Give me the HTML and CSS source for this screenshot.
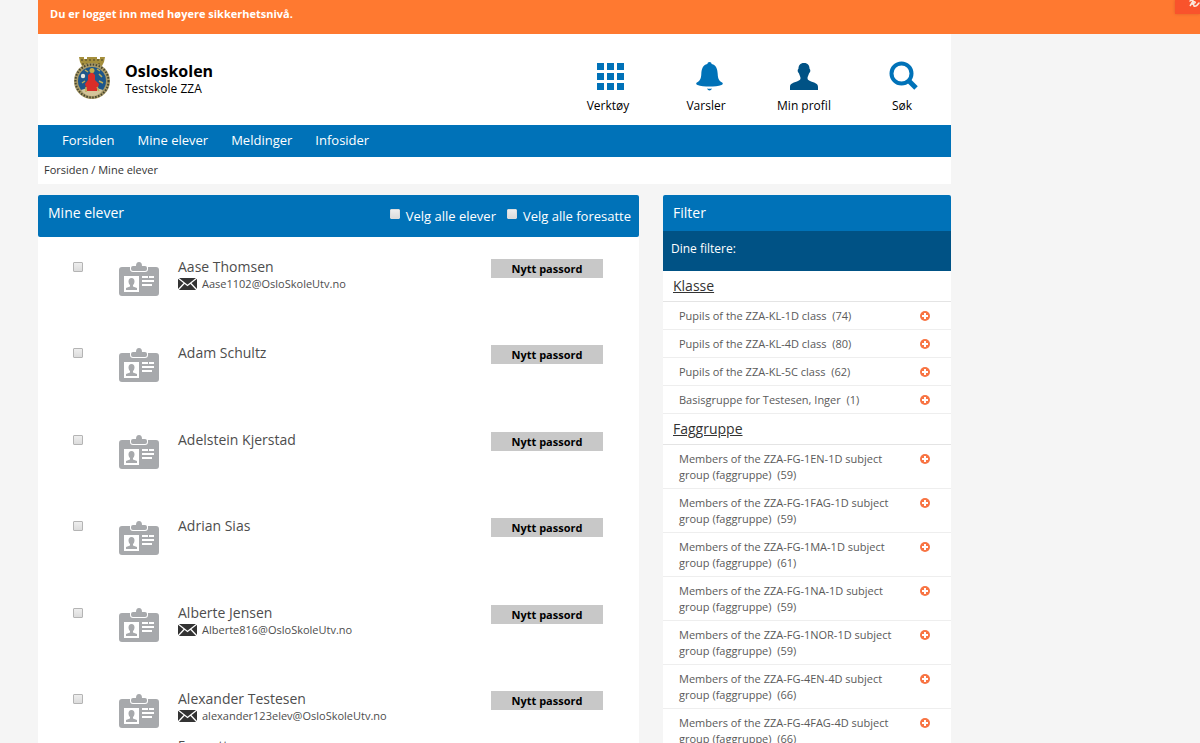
FILE: index.html
```html
<!DOCTYPE html>
<html lang="no">
<head>
<meta charset="utf-8">
<title>Mine elever – Osloskolen</title>
<meta name="viewport" content="width=device-width, initial-scale=1">
<link rel="stylesheet" href="styles.css">
</head>
<body>
<svg class="sprite" aria-hidden="true">
  <symbol id="card" viewBox="0 0 40 36">
    <path fill="#a7a9ac" d="M3 6h8v2q0 3 3 3h12q3 0 3-3V6h8q3 0 3 3v23q0 3-3 3H3q-3 0-3-3V9q0-3 3-3z"/>
    <path fill="#a7a9ac" d="M12 8V7q0-2 2-2h3q0-4 3-4t3 4h3q2 0 2 2v1q0 2-2 2H14q-2 0-2-2z"/>
    <path fill="#fff" d="M5 15h15v16H5z"/>
    <path fill="#a7a9ac" d="M12.500 17c2 0 3 1.500 3 3.500 0 1.500-.8 3-1.500 3.500v1.500l4 1.500v2H7v-2l4-1.500V24c-.7-.5-1.500-2-1.500-3.500 0-2 1-3.500 3-3.500z"/>
    <path fill="#fff" d="M23 15h6v2h-6zM30 15h5v2h-5zM23 19h12v2H23zM23 23h10v2H23z"/>
  </symbol>
  <symbol id="mail" viewBox="0 0 20 14">
    <path fill="#333" d="M0 1h19v12H0z"/>
    <path fill="none" stroke="#fff" stroke-width="1.300" d="M0 1l9.500 7.500L19 1M0 13l6.500-7M19 13l-6.500-7"/>
  </symbol>
  <symbol id="plus" viewBox="0 0 10 10">
    <circle cx="5" cy="5" r="5" fill="#f87443"/>
    <path stroke="#fff" stroke-width="2" d="M5 2v6M2 5h6"/>
  </symbol>
</svg>

<div class="alert">
  <p>Du er logget inn med høyere sikkerhetsnivå.</p>
  <a class="ribbon" href="#" aria-label="Tilbakemelding">
    <svg width="25" height="14" viewBox="0 0 25 14" fill="none" stroke="#fbe9dd" stroke-width="1.500" stroke-linecap="round"><path d="M15 1q3-2 3 0l-3 5q3-5 5-4 1 1-3 2 2 0 2 2 2 1 5-3"/></svg>
  </a>
</div>

<div class="page">
  <header class="header">
    <a class="brand" href="#">
      <svg class="crest" width="38" height="44" viewBox="0 0 38 44" aria-hidden="true">
        <path fill="#a58f3c" d="M6 1h5v2h3V1h10v2h3V1h5l-1 5-2 4H9L7 6z"/>
        <path fill="none" stroke="#4b4426" stroke-dasharray="2 2" d="M8 4h22M9 8h20"/>
        <circle cx="19" cy="25" r="18" fill="#a99b69"/>
        <circle cx="19" cy="25" r="16.500" fill="none" stroke="#47452f" stroke-width="2" stroke-dasharray="1.500 1.500"/>
        <circle cx="19" cy="25" r="14" fill="#1d568b"/>
        <path fill="#d4c59b" d="M8 34q11-5 22 0-4 6-11 6T8 34z"/>
        <path fill="#d92d28" d="M19 16l3 3v5l4 4-2 7H14l-2-7 3-4v-5z"/>
        <circle cx="19" cy="14.500" r="2.500" fill="#c5ad4a"/>
        <circle cx="10" cy="20" r="2.200" fill="#e5e8df"/>
        <path stroke="#bdad58" stroke-width="1.500" fill="none" d="M26 18l3 3M9 27l3-2M26 25l4 2M13 31v5M24 31l2 4M12 14l3 2M24 13l3 2"/>
      </svg>
      <span class="brand-text"><strong>Osloskolen</strong><span>Testskole ZZA</span></span>
    </a>
    <div class="tools">
      <a href="#"><svg width="36" height="32" viewBox="-1 0 36 32" fill="#0072b8"><path d="M6 3h7v7H6zM16 3h7v7h-7zM26 3h7v7h-7zM6 13h7v7H6zM16 13h7v7h-7zM26 13h7v7h-7zM6 23h7v7H6zM16 23h7v7h-7zM26 23h7v7h-7z"/></svg>Verktøy</a>
      <a href="#"><svg width="36" height="32" viewBox="-1 0 36 32" fill="#0072b8"><path d="M20.500 2q2 0 2.200 2c4.500 1.200 5.800 5 6 10 .2 5 1.500 7 4.500 8.500 1 .8.800 2-.7 2.500-6 2-18 2-24 0-1.500-.5-1.700-1.700-.7-2.500 3-1.500 4.300-3.500 4.500-8.500.2-5 1.500-8.800 6-10q.2-2 2.200-2zM18 28.500q2.500.6 5 0-.8 2-2.500 2T18 28.500z"/></svg>Varsler</a>
      <a href="#"><svg width="36" height="32" viewBox="-1 0 36 32" fill="#005285"><path d="M17 3c4 0 5.500 2.500 5.500 5.500 0 .7 1 .8.800 2.500-.2 1.500-1 1.500-1.300 2.500-.5 2-1.500 3-1.500 4.500 0 1.500.5 2 2.500 3 5 2 8 2.500 8 6v3H3v-3c0-3.500 3-4 8-6 2-1 2.500-1.500 2.500-3 0-1.500-1-2.500-1.500-4.500-.3-1-1.100-1-1.300-2.500-.2-1.700.8-1.800.8-2.500C11.500 5.500 13 3 17 3z"/></svg>Min profil</a>
      <a href="#"><svg width="36" height="32" viewBox="-1 0 36 32" fill="none" stroke="#0072b8"><circle cx="16.500" cy="13.500" r="10" stroke-width="4"/><path stroke-width="5" d="M23 20l8 8"/></svg>Søk</a>
    </div>
  </header>

  <nav class="nav">
    <a href="#">Forsiden</a><a href="#">Mine elever</a><a href="#">Meldinger</a><a href="#">Infosider</a>
  </nav>
  <div class="crumbs"><a href="#">Forsiden</a> / <a href="#">Mine elever</a></div>

  <div class="columns">
    <main class="pupils">
      <div class="panel-head">
        <h1>Mine elever</h1>
        <div class="select-all">
          <label><input type="checkbox">Velg alle elever</label>
          <label><input type="checkbox">Velg alle foresatte</label>
        </div>
      </div>
      <ul class="pupil-list">
        <li><input type="checkbox" aria-label="Aase Thomsen"><svg class="card"><use href="#card"/></svg>
          <div class="who"><h2>Aase Thomsen</h2><a href="#"><svg><use href="#mail"/></svg>Aase1102@OsloSkoleUtv.no</a></div>
          <button type="button">Nytt passord</button></li>
        <li><input type="checkbox" aria-label="Adam Schultz"><svg class="card"><use href="#card"/></svg>
          <div class="who"><h2>Adam Schultz</h2></div>
          <button type="button">Nytt passord</button></li>
        <li><input type="checkbox" aria-label="Adelstein Kjerstad"><svg class="card"><use href="#card"/></svg>
          <div class="who"><h2>Adelstein Kjerstad</h2></div>
          <button type="button">Nytt passord</button></li>
        <li><input type="checkbox" aria-label="Adrian Sias"><svg class="card"><use href="#card"/></svg>
          <div class="who"><h2>Adrian Sias</h2></div>
          <button type="button">Nytt passord</button></li>
        <li><input type="checkbox" aria-label="Alberte Jensen"><svg class="card"><use href="#card"/></svg>
          <div class="who"><h2>Alberte Jensen</h2><a href="#"><svg><use href="#mail"/></svg>Alberte816@OsloSkoleUtv.no</a></div>
          <button type="button">Nytt passord</button></li>
        <li><input type="checkbox" aria-label="Alexander Testesen"><svg class="card"><use href="#card"/></svg>
          <div class="who"><h2>Alexander Testesen</h2><a href="#"><svg><use href="#mail"/></svg>alexander123elev@OsloSkoleUtv.no</a><h3>Foresatte</h3></div>
          <button type="button">Nytt passord</button></li>
      </ul>
    </main>

    <aside class="filter">
      <h2 class="filter-title">Filter</h2>
      <p class="active">Dine filtere:</p>
      <h3><a href="#">Klasse</a></h3>
      <ul>
        <li><span>Pupils of the ZZA-KL-1D class &nbsp;(74)</span><button type="button" aria-label="Legg til"><svg><use href="#plus"/></svg></button></li>
        <li><span>Pupils of the ZZA-KL-4D class &nbsp;(80)</span><button type="button" aria-label="Legg til"><svg><use href="#plus"/></svg></button></li>
        <li><span>Pupils of the ZZA-KL-5C class &nbsp;(62)</span><button type="button" aria-label="Legg til"><svg><use href="#plus"/></svg></button></li>
        <li><span>Basisgruppe for Testesen, Inger &nbsp;(1)</span><button type="button" aria-label="Legg til"><svg><use href="#plus"/></svg></button></li>
      </ul>
      <h3><a href="#">Faggruppe</a></h3>
      <ul>
        <li><span>Members of the ZZA-FG-1EN-1D subject group (faggruppe) &nbsp;(59)</span><button type="button" aria-label="Legg til"><svg><use href="#plus"/></svg></button></li>
        <li><span>Members of the ZZA-FG-1FAG-1D subject group (faggruppe) &nbsp;(59)</span><button type="button" aria-label="Legg til"><svg><use href="#plus"/></svg></button></li>
        <li><span>Members of the ZZA-FG-1MA-1D subject group (faggruppe) &nbsp;(61)</span><button type="button" aria-label="Legg til"><svg><use href="#plus"/></svg></button></li>
        <li><span>Members of the ZZA-FG-1NA-1D subject group (faggruppe) &nbsp;(59)</span><button type="button" aria-label="Legg til"><svg><use href="#plus"/></svg></button></li>
        <li><span>Members of the ZZA-FG-1NOR-1D subject group (faggruppe) &nbsp;(59)</span><button type="button" aria-label="Legg til"><svg><use href="#plus"/></svg></button></li>
        <li><span>Members of the ZZA-FG-4EN-4D subject group (faggruppe) &nbsp;(66)</span><button type="button" aria-label="Legg til"><svg><use href="#plus"/></svg></button></li>
        <li><span>Members of the ZZA-FG-4FAG-4D subject group (faggruppe) &nbsp;(66)</span><button type="button" aria-label="Legg til"><svg><use href="#plus"/></svg></button></li>
      </ul>
    </aside>
  </div>
</div>
</body>
</html>
```
FILE: styles.css
```css
* { box-sizing: border-box; }

body {
  margin: 0;
  padding-left: 38px;
  background: #f5f5f5;
  color: #333;
  font: 11px/16px "Open Sans", "Noto Sans", sans-serif;
}

h1, h2, h3, p, ul { margin: 0; padding: 0; font-weight: 400; }
ul { list-style: none; }
a { color: inherit; text-decoration: none; }
svg { display: block; flex: none; }
.sprite { position: absolute; width: 0; height: 0; }

input[type="checkbox"] {
  appearance: none;
  flex: none;
  width: 10px;
  height: 10px;
  margin: 0;
  border: 1px solid #b4b4b4;
  border-radius: 1px;
  background: linear-gradient(#eee, #dcdcdc);
}
input[type="checkbox"]:checked { background: #0072b8; }

.alert {
  position: relative;
  padding: 6px 12px 12px;
  background: #ff7930;
  color: #fff;
}
.alert p { font-weight: 700; }
.ribbon {
  position: absolute;
  top: 0;
  right: 0;
  background: #f9532c;
  box-shadow: 0 0 3px #d9622a;
}

.page { max-width: 913px; }

.header {
  display: flex;
  justify-content: space-between;
  padding: 22px 0 11px 35px;
  background: #fff;
  color: #000;
  font-size: 12px;
}
.brand { display: flex; gap: 14px; }
.brand-text { display: flex; flex-direction: column; padding-top: 5px; }
.brand-text strong { font-size: 16px; line-height: 20px; }
.tools { display: flex; padding-top: 4px; }
.tools a {
  display: flex;
  flex-direction: column;
  align-items: center;
  gap: 6px;
  width: 98px;
}

.nav {
  display: flex;
  gap: 23px;
  padding: 5px 24px 7px;
  background: #0072b8;
  color: #fff;
  font-size: 13px;
  line-height: 20px;
}
.crumbs { padding: 5px 6px 6px; background: #fff; }

.columns {
  display: grid;
  grid-template-columns: minmax(0, 1fr) 288px;
  gap: 24px;
  padding-top: 11px;
}

.panel-head {
  display: flex;
  justify-content: space-between;
  padding: 8px 8px 11px 10px;
  border-radius: 2px;
  background: #0072b8;
  color: #fff;
}
.panel-head h1 { font-size: 14px; line-height: 20px; }
.select-all { display: flex; gap: 11px; padding-top: 3px; font-size: 13px; line-height: 20px; }
.select-all label { display: flex; gap: 6px; }
.select-all input { margin-top: 3px; border-color: #ddd; }

.pupils { background: #fff; }
.pupil-list { padding-top: 20px; }
.pupil-list li {
  display: flex;
  align-items: flex-start;
  min-height: 86px;
  padding: 0 36px 0 35px;
}
.pupil-list li:nth-child(even) { min-height: 87px; }
.pupil-list input { margin-top: 5px; }
.card { width: 40px; height: 36px; margin: 4px 19px 0 36px; }
.who { flex: 1; color: #4d4d4d; }
.who h2 { font-size: 14px; line-height: 20px; }
.who h3 { padding-top: 12px; font-size: 13px; line-height: 20px; }
.who a { display: flex; align-items: center; gap: 4px; line-height: 14px; }
.who svg { width: 20px; height: 14px; }
.pupil-list button {
  width: 112px;
  height: 19px;
  margin-top: 2px;
  padding: 0;
  border: 0;
  background: #c8c8c8;
  color: #000;
  font: 700 11px/19px "Open Sans", "Noto Sans", sans-serif;
}

.filter { background: #fff; }
.filter-title {
  padding: 8px 10px;
  border-radius: 2px 2px 0 0;
  background: #0072b8;
  color: #fff;
  font-size: 14px;
  line-height: 20px;
}
.active { padding: 10px 8px 14px; background: #005285; color: #fff; font-size: 12px; }
.filter h3 {
  padding: 5px 10px;
  border-bottom: 1px solid #e4e4e4;
  font-size: 14px;
  line-height: 20px;
  text-decoration: underline;
}
.filter li {
  display: flex;
  justify-content: space-between;
  padding: 6px 21px 5px 16px;
  border-bottom: 1px solid #eee;
  color: #5a5a5a;
}
.filter span { max-width: 222px; }
.filter button { height: 16px; padding: 0; border: 0; background: none; }
.filter button svg { width: 10px; height: 10px; }
```
